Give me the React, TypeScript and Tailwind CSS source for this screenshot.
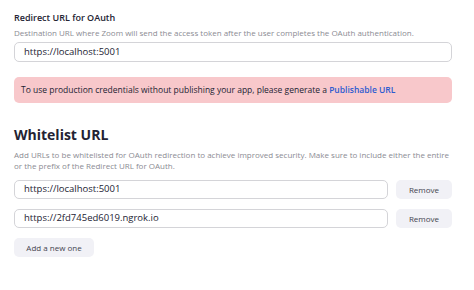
import React from "react";

export default function App() {
  return (
    <div className="w-[474px] h-[290px] bg-white px-[14px] pt-[12px] text-[#232333]" style={{ fontFamily: '"Open Sans", sans-serif' }}>
      <div className="w-[438px]">
        <div className="text-[9px] font-semibold leading-[12px]">Redirect URL for OAuth</div>
        <div className="mt-[3px] text-[8px] leading-[12px] text-[#8b8b93]">
          Destination URL where Zoom will send the access token after the user completes the OAuth authentication.
        </div>
        <div className="mt-[3px] h-[20px] rounded-[5px] border border-[#d4d4d8] flex items-center pl-[9px] text-[9.5px]">
          https://localhost:5001
        </div>
        <div className="mt-[15px] h-[26px] rounded-[5px] bg-[#f8c8cb] flex items-center pl-[7px] text-[8.5px]">
          <span>
            To use production credentials without publishing your app, please generate a{" "}
            <span className="font-semibold text-[#2d5bd0]">Publishable URL</span>
          </span>
        </div>
        <div className="mt-[22px] text-[14px] font-bold leading-[20px]">Whitelist URL</div>
        <div className="mt-[4px] text-[8px] leading-[11px] text-[#8b8b93]">
          Add URLs to be whitelisted for OAuth redirection to achieve improved security. Make sure to include either the entire or the prefix of the Redirect URL for OAuth.
        </div>
        <div className="mt-[9px] flex flex-col gap-[10px]">
          {["https://localhost:5001", "https://2fd745ed6019.ngrok.io"].map((u) => (
            <div key={u} className="flex gap-[8px]">
              <div className="w-[374px] h-[19px] rounded-[5px] border border-[#d4d4d8] flex items-center pl-[9px] text-[9.5px]">
                {u}
              </div>
              <div className="w-[56px] h-[19px] rounded-[5px] bg-[#f1f1f6] flex items-center justify-center text-[8px] text-[#44444f]">
                Remove
              </div>
            </div>
          ))}
          <div className="w-[80px] h-[19px] rounded-[5px] bg-[#f1f1f6] flex items-center justify-center text-[8px] text-[#44444f]">
            Add a new one
          </div>
        </div>
      </div>
    </div>
  );
}
